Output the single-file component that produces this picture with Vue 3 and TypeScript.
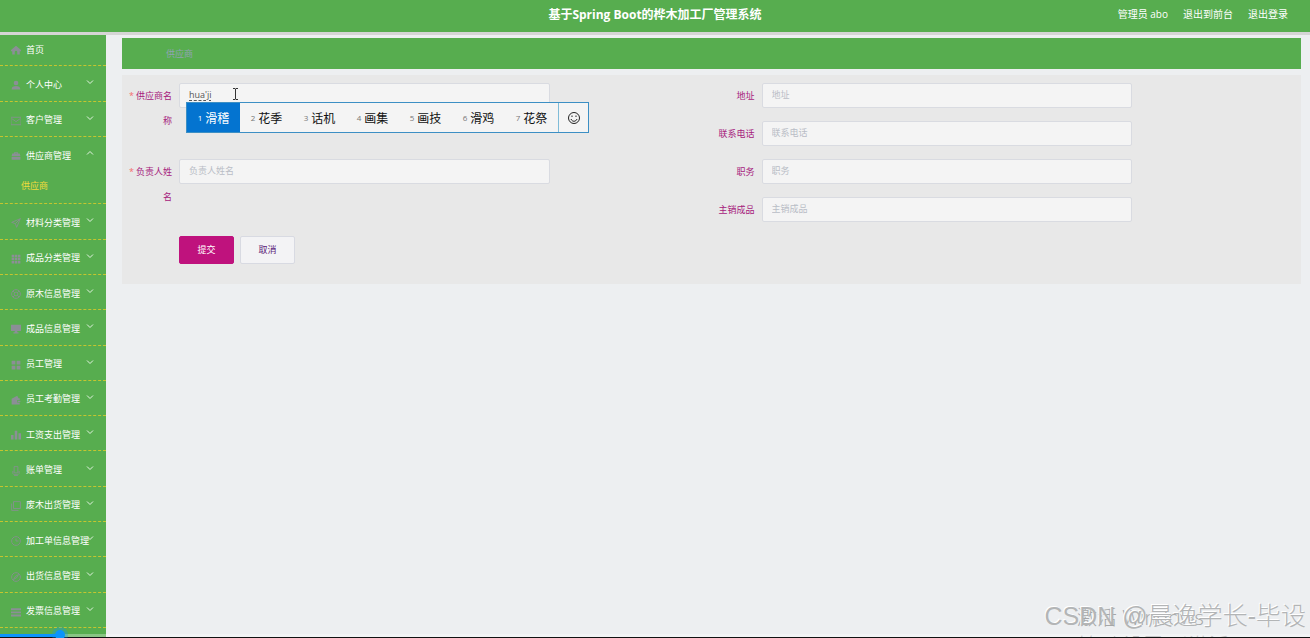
<script setup lang="ts">
import { ref } from 'vue'

interface MenuItem {
  title: string
  icon: string
  children?: string[]
}

const menu: MenuItem[] = [
  { title: '个人中心', icon: 'user' },
  { title: '客户管理', icon: 'mail' },
  { title: '供应商管理', icon: 'case', children: ['供应商'] },
  { title: '材料分类管理', icon: 'send' },
  { title: '成品分类管理', icon: 'grid' },
  { title: '原木信息管理', icon: 'globe' },
  { title: '成品信息管理', icon: 'monitor' },
  { title: '员工管理', icon: 'squares' },
  { title: '员工考勤管理', icon: 'wallet' },
  { title: '工资支出管理', icon: 'bars' },
  { title: '账单管理', icon: 'mic' },
  { title: '废木出货管理', icon: 'copy' },
  { title: '加工单信息管理', icon: 'clock' },
  { title: '出货信息管理', icon: 'compass' },
  { title: '发票信息管理', icon: 'list' },
]

const solid: Record<string, string> = {
  home: 'M8 1 0 8v2h2v5h4v-4a2 2 0 0 1 4 0v4h4v-5h2V8z',
  user: 'M8 1a3.500 3.500 0 1 1 0 7.500A3.500 3.500 0 0 1 8 1M1 15c0-4 3-5.500 7-5.500s7 1.500 7 5.500z',
  case: 'M5 4V2h6v2h3l1 4H1l1-4zM7 3v1h2V3zM1 9h14v5H1z',
  grid: 'M1 1h4v4H1zM6 1h4v4H6zM11 1h4v4h-4zM1 6h4v4H1zM6 6h4v4H6zM11 6h4v4h-4zM1 11h4v4H1zM6 11h4v4H6zM11 11h4v4h-4z',
  monitor: 'M0 1h16v10H0zM6 11h4v2h2v2H4v-2h2z',
  squares: 'M1 1h6v6H1zM9 1h6v6H9zM1 9h6v6H1zM9 9h6v6H9z',
  wallet: 'M1 6 10 1l2 4h2v3h-4v4h4v3H1zM11 9h4v2h-4z',
  bars: 'M0 8h4v7H0zM6 1h4v14H6zM12 5h4v10h-4z',
  list: 'M0 2h16v3H0zM0 7h16v3H0zM0 12h16v3H0z',
}

const outline: Record<string, string> = {
  mail: 'M0 2h16v12H0zM1 4l7 5 7-5',
  send: 'M1 7 15 1 9 15 7 9zM7 9l8-8',
  globe: 'M8 1a7 7 0 1 0 0 14A7 7 0 0 0 8 1M8 5a3 3 0 1 0 0 6 3 3 0 0 0 0-6M3 3l3 3M13 3l-3 3M3 13l3-3M13 13l-3-3',
  mic: 'M5 1h6v10H5zM3 8v4l2 2h6l2-2V8M5 15h6',
  copy: 'M4 1h11v11H4zM1 4v11h11',
  clock: 'M8 1a7 7 0 1 0 0 14A7 7 0 0 0 8 1M8 4v4h4',
  compass: 'M8 1a7 7 0 1 0 0 14A7 7 0 0 0 8 1M12 4l-3 5-5 3 3-5z',
}

const candidates = ['滑稽', '花季', '话机', '画集', '画技', '滑鸡', '花祭']

const supplier = ref("hua'ji")
const manager = ref('')
const details = [
  { id: 'address', label: '地址' },
  { id: 'phone', label: '联系电话' },
  { id: 'job', label: '职务' },
  { id: 'product', label: '主销成品' },
]
</script>

<template>
  <div class="page">
    <header class="top">
      <h1>基于Spring Boot的桦木加工厂管理系统</h1>
      <nav class="account">
        <span>管理员 abo</span>
        <a href="#">退出到前台</a>
        <a href="#">退出登录</a>
      </nav>
    </header>

    <div class="body">
      <aside class="side">
        <ul class="menu">
          <li class="entry home">
            <a class="row" href="#">
              <svg class="icon" viewBox="0 0 16 16"><path class="solid" :d="solid.home" /></svg>
              <span class="name">首页</span>
            </a>
          </li>
          <li v-for="item in menu" :key="item.title" class="entry" :class="{ open: item.children }">
            <button class="row" type="button" :aria-expanded="!!item.children">
              <svg class="icon" viewBox="0 0 16 16">
                <path v-if="solid[item.icon]" class="solid" :d="solid[item.icon]" />
                <path v-else class="line" :d="outline[item.icon]" />
              </svg>
              <span class="name">{{ item.title }}</span>
              <svg class="arrow" viewBox="0 0 8 8">
                <path :d="item.children ? 'M1 5.500 4 2.500 7 5.500' : 'M1 2.500 4 5.500 7 2.500'" />
              </svg>
            </button>
            <a v-for="child in item.children" :key="child" class="child" href="#">{{ child }}</a>
          </li>
        </ul>
      </aside>

      <main class="content">
        <div class="crumb">供应商</div>
        <form class="card" @submit.prevent>
          <div class="columns">
            <div class="column left">
              <div class="field">
                <label for="supplier"><i>*</i>供应商名称</label>
                <div class="control">
                  <input id="supplier" v-model="supplier" class="composing" type="text" />
                  <svg class="caret" viewBox="0 0 7 12"><path d="M1 .5h2l.5.5.5-.5h2M3.500 1v10M1 11.500h2l.5-.5.5.5h2" /></svg>
                  <div class="ime">
                    <button
                      v-for="(word, n) in candidates"
                      :key="word"
                      class="word"
                      :class="{ active: n === 0 }"
                      type="button"
                    >
                      <small>{{ n + 1 }}</small>{{ word }}
                    </button>
                    <button class="emoji" type="button" aria-label="表情">
                      <svg viewBox="0 0 14 14">
                        <circle cx="7" cy="7" r="5.500" />
                        <path d="M4 8c1 3 5 3 6 0M5 4.500v1.500M9 4.500v1.500" />
                      </svg>
                    </button>
                  </div>
                </div>
              </div>
              <div class="field">
                <label for="manager"><i>*</i>负责人姓名</label>
                <div class="control">
                  <input id="manager" v-model="manager" type="text" placeholder="负责人姓名" />
                </div>
              </div>
            </div>
            <div class="column right">
              <div v-for="d in details" :key="d.id" class="field">
                <label :for="d.id">{{ d.label }}</label>
                <div class="control"><input :id="d.id" type="text" :placeholder="d.label" /></div>
              </div>
            </div>
          </div>
          <div class="actions">
            <button class="submit" type="submit">提交</button>
            <button class="cancel" type="button">取消</button>
          </div>
        </form>
      </main>
    </div>

    <div class="activate">激活 Windows<br />转到“设置”以激活 Windows。</div>
    <div class="mark">CSDN @晨逸学长-毕设</div>
    <div class="player"><div class="played"></div></div>
  </div>
</template>

<style>
body {
  overflow: hidden;
  background: #edeff1;
}
</style>

<style scoped>
* {
  box-sizing: border-box;
}
.page {
  position: relative;
  display: flex;
  flex-direction: column;
  height: 100vh;
  overflow: hidden;
  background: #edeff1;
  color: #fff;
  font-family: "Open Sans", "Noto Sans CJK SC", sans-serif;
  font-size: 9px;
}
button,
input {
  margin: 0;
  padding: 0;
  border: 0;
  background: none;
  font: inherit;
  color: inherit;
}
a {
  color: inherit;
  text-decoration: none;
}
.top {
  display: grid;
  grid-template-columns: 1fr auto 1fr;
  align-items: center;
  flex: none;
  height: 35px;
  padding: 0 22px 2px;
  border-bottom: 3px solid #d5d5d5;
  background: #57ad4f;
}
.top h1 {
  grid-column: 2;
  margin: 0;
  font-size: 12px;
  line-height: 20px;
}
.account {
  display: flex;
  justify-content: flex-end;
  gap: 15px;
  padding-bottom: 4px;
  font-size: 10px;
}
.body {
  display: flex;
  flex: 1;
  min-height: 0;
}
.side {
  display: flex;
  flex: none;
  width: 106px;
  padding-bottom: 10px;
  background: #57ad4f;
}
.menu {
  display: flex;
  flex: 1;
  flex-direction: column;
  margin: 0;
  padding: 0;
  list-style: none;
}
.entry {
  display: flex;
  flex: 1 0 35px;
  flex-direction: column;
  border-bottom: 1px dashed #c5c52f;
}
.entry.home {
  flex-basis: 31px;
}
.entry.open {
  flex-basis: 67px;
}
.row {
  display: flex;
  flex: 1;
  align-items: center;
  padding: 2px 12px 0 11px;
  text-align: left;
  white-space: nowrap;
}
.home .row {
  padding-top: 0;
  padding-bottom: 2px;
}
.icon {
  flex: none;
  width: 10px;
  height: 10px;
  margin: 2px 5px 0 0;
}
.solid {
  fill: #8b8f96;
}
.line {
  fill: none;
  stroke: #83918c;
  stroke-width: 1.5;
}
.name {
  flex: 1;
  width: 0;
}
.arrow {
  flex: none;
  width: 8px;
  height: 8px;
  margin-bottom: 4px;
}
.arrow path {
  fill: none;
  stroke: #e2f3e0;
  stroke-width: 1;
}
.child {
  height: 32px;
  padding-left: 21px;
  color: #f0dc3c;
  line-height: 30px;
}
.content {
  flex: 1;
  min-width: 0;
  padding: 3px 9px 0 16px;
}
.crumb {
  height: 31px;
  margin-bottom: 6px;
  padding-left: 44px;
  background: #57ad4f;
  color: #8fa3b2;
  line-height: 31px;
}
.card {
  padding: 8px 14px 20px 0;
  background: #e8e8e8;
}
.columns {
  display: grid;
  grid-template-columns: 1fr 1fr;
}
.column {
  display: flex;
  flex-direction: column;
  padding-right: 155px;
}
.left {
  gap: 26px;
}
.right {
  gap: 13px;
}
.field {
  display: flex;
  gap: 7px;
}
label {
  flex: none;
  width: 50px;
  padding-left: 4px;
  color: #a6207c;
  line-height: 25px;
  text-align: right;
}
label i {
  margin-right: 2px;
  color: #f56c6c;
  font-style: normal;
}
.control {
  position: relative;
  flex: 1;
  height: 25px;
}
.control input {
  width: 100%;
  height: 25px;
  padding: 0 9px 2px;
  border: 1px solid #d9dbe1;
  border-radius: 2px;
  background: #f4f4f4;
  color: #555;
  outline: none;
}
.control input::placeholder {
  color: #b9bdc6;
  opacity: 1;
}
.control .composing {
  text-decoration: underline dashed 1px;
  text-underline-offset: 2px;
}
.caret {
  position: absolute;
  top: 5px;
  left: 53px;
  width: 7px;
  height: 12px;
}
.caret path {
  fill: none;
  stroke: #333;
}
.ime {
  position: absolute;
  z-index: 2;
  top: 19px;
  left: 7px;
  display: flex;
  height: 31px;
  border: 1px solid #3c8fc4;
  background: #f4f4f4;
  color: #111;
  font-size: 12px;
}
.word {
  display: flex;
  align-items: center;
  justify-content: center;
  gap: 3px;
  width: 53px;
  white-space: nowrap;
}
.word small {
  color: #777;
  font-size: 8px;
}
.word.active,
.word.active small {
  background: #0474d0;
  color: #fff;
}
.emoji {
  display: flex;
  align-items: center;
  justify-content: center;
  width: 30px;
  border-left: 1px solid #7fbcd8;
}
.emoji svg {
  width: 14px;
  height: 14px;
}
.emoji circle,
.emoji path {
  fill: none;
  stroke: #222;
}
.actions {
  display: flex;
  gap: 6px;
  margin: 14px 0 0 57px;
}
.actions button {
  width: 55px;
  height: 28px;
  padding-bottom: 2px;
  border: 1px solid #d8dae2;
  border-radius: 2px;
  background: #f3f3f5;
  color: #5b1a78;
}
.actions .submit {
  border-color: #bf127d;
  background: #bf127d;
  color: #fff;
}
.activate,
.mark {
  position: absolute;
  white-space: nowrap;
  pointer-events: none;
}
.activate {
  top: 604px;
  left: 1077px;
  color: #a5a7a8;
  font-size: 20px;
  font-weight: 300;
  line-height: 28px;
}
.activate::first-line {
  line-height: 28px;
}
.mark {
  right: 4px;
  bottom: 2px;
  color: #b3b5b6;
  font-family: "Liberation Sans", "Noto Sans CJK SC", sans-serif;
  font-size: 25px;
  font-weight: 300;
  line-height: 40px;
  text-shadow: -1px -1px 0 #fff;
}
.player {
  position: absolute;
  right: 0;
  bottom: 0;
  left: 0;
  height: 4px;
  border-bottom: 1px solid #111;
  background: rgba(255, 255, 255, 0.3);
}
.played {
  position: relative;
  width: 60px;
  height: 3px;
  background: #0b94fb;
}
.played::after {
  position: absolute;
  top: -4px;
  right: -5px;
  width: 10px;
  height: 10px;
  border-radius: 50%;
  background: #0b94fb;
  box-shadow: 0 0 0 3px rgba(11, 148, 251, 0.3);
  content: "";
}
</style>
